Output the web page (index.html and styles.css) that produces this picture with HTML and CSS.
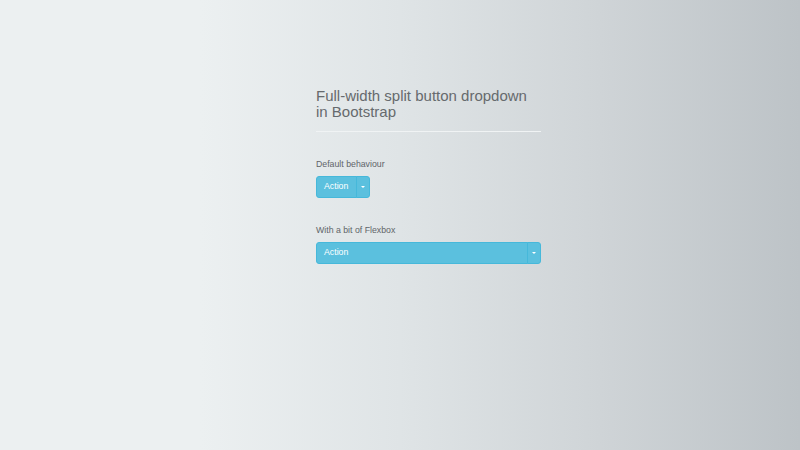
FILE: index.html
```html
<!DOCTYPE html>
<html>
<head>
<meta charset="utf-8">
<link rel="stylesheet" href="styles.css">
</head>
<body>
<div class="page">
  <div class="content">
    <h1 class="title">Full-width split button dropdown in Bootstrap</h1>
    <hr class="rule">
    <p class="label">Default behaviour</p>
    <div class="split">
      <button class="btn btn-main">Action</button>
      <button class="btn btn-caret"><span class="caret"></span></button>
    </div>
    <p class="label label-second">With a bit of Flexbox</p>
    <div class="split split-full">
      <button class="btn btn-main">Action</button>
      <button class="btn btn-caret"><span class="caret"></span></button>
    </div>
  </div>
</div>
</body>
</html>
```
FILE: styles.css
```css
html, body {
  margin: 0;
  height: 100%;
}
body {
  font-family: "Liberation Sans", Arial, sans-serif;
  background: linear-gradient(to right, #ecf0f1 0%, #ecf0f1 25%, #dfe4e6 50%, #cfd4d7 75%, #bdc3c7 100%);
  color: #666;
}
.page {
  height: 100%;
  padding-left: 316px;
  padding-top: 88px;
  box-sizing: border-box;
}
.content {
  width: 225px;
}
.title {
  margin: 0;
  font-size: 15px;
  font-weight: normal;
  line-height: 16px;
  color: #666a6d;
}
.rule {
  margin: 11px 0 0;
  border: 0;
  border-top: 1px solid #f0f3f4;
  height: 0;
}
.label {
  margin: 26px 0 0;
  font-size: 8.75px;
  line-height: 12px;
  color: #606468;
}
.label-second {
  margin-top: 26px;
}
.split {
  display: inline-flex;
  margin-top: 6px;
}
.split-full {
  display: flex;
}
.btn {
  font-family: inherit;
  font-size: 8.75px;
  line-height: 13px;
  color: #fff;
  background: #5bc0de;
  border: 1px solid #46b8da;
  padding: 3px 8px 4px 7px;
  margin: 0;
  cursor: pointer;
}
.btn-main {
  border-radius: 3px 0 0 3px;
  text-align: left;
}
.split-full .btn-main {
  flex: 1;
}
.btn-caret {
  border-left: 1px solid #46b8da;
  margin-left: -1px;
  border-radius: 0 3px 3px 0;
  padding: 3px 4px 4px;
  display: flex;
  align-items: center;
}
.caret {
  display: inline-block;
  width: 0;
  height: 0;
  border-top: 2.5px solid #fff;
  border-left: 2.5px solid transparent;
  border-right: 2.5px solid transparent;
}
```
